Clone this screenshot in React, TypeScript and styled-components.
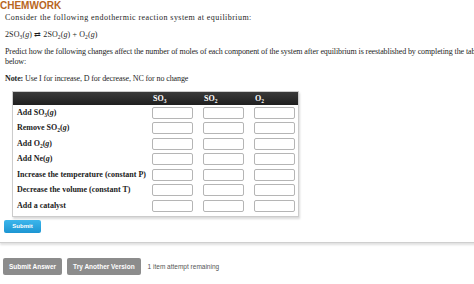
import styled, { createGlobalStyle } from 'styled-components';

const GlobalStyle = createGlobalStyle`
  html, body {
    margin: 0;
    padding: 0;
    background: #ffffff;
    overflow: hidden;
  }
`;

const rows = [
  { label: <>Add SO<sub>3</sub>(<i>g</i>)</> },
  { label: <>Remove SO<sub>2</sub>(<i>g</i>)</> },
  { label: <>Add O<sub>2</sub>(<i>g</i>)</> },
  { label: <>Add Ne(<i>g</i>)</> },
  { label: <>Increase the temperature (constant P)</> },
  { label: <>Decrease the volume (constant T)</> },
  { label: <>Add a catalyst</> },
];

export default function App() {
  return (
    <Page>
      <GlobalStyle />
      <Brand>CHEMWORK</Brand>
      <Question>
        <Para $track={0.45}>Consider the following endothermic reaction system at equilibrium:</Para>
        <Para $track={0.1}>
          2SO<sub>3</sub>(<i>g</i>) ⇄ 2SO<sub>2</sub>(<i>g</i>) + O<sub>2</sub>(<i>g</i>)
        </Para>
        <Para>
          Predict how the following changes affect the number of moles of each component of the
          system after equilibrium is reestablished by completing the table below:
        </Para>
        <Para>
          <b>Note:</b> Use I for increase, D for decrease, NC for no change
        </Para>
        <TableCard>
          <HeadRow>
            <HeadCell />
            <HeadCell>SO<sub>3</sub></HeadCell>
            <HeadCell>SO<sub>2</sub></HeadCell>
            <HeadCell>O<sub>2</sub></HeadCell>
          </HeadRow>
          {rows.map((row, i) => (
            <BodyRow key={i}>
              <RowLabel>{row.label}</RowLabel>
              <AnswerBox />
              <AnswerBox />
              <AnswerBox />
            </BodyRow>
          ))}
        </TableCard>
        <SubmitButton>Submit</SubmitButton>
      </Question>
      <Footer>
        <GrayButton>Submit Answer</GrayButton>
        <GrayButton>Try Another Version</GrayButton>
        <Attempts>1 item attempt remaining</Attempts>
      </Footer>
    </Page>
  );
}

const Page = styled.div`
  width: 474px;
  height: 284px;
  overflow: hidden;
`;

const Brand = styled.div`
  font-family: 'Liberation Sans', Arial, sans-serif;
  font-weight: bold;
  font-size: 10px;
  line-height: 11px;
  color: #b8661e;
`;

const Question = styled.div`
  width: 488px;
  padding: 2px 0 9px 5px;
  font-family: 'Liberation Serif', 'Times New Roman', serif;
  font-size: 8px;
  line-height: 10px;
  color: #1e1e1e;
  border-bottom: 1px solid #cfcfcf;
  box-shadow: 0 2px 2px rgba(0, 0, 0, 0.12);

  sub {
    font-size: 5.5px;
    line-height: 0;
    vertical-align: -2px;
  }
`;

const Para = styled.p<{ $track?: number }>`
  margin: 0 0 7px 0;
  letter-spacing: ${(p) => (p.$track ?? -0.1)}px;
`;

const TableCard = styled.div`
  margin: 5px 0 0 7px;
  width: 285px;
  border: 1px solid #cccccc;
  box-shadow: 1px 2px 2px rgba(0, 0, 0, 0.15);
  padding-bottom: 2px;
`;

const grid = `
  display: grid;
  grid-template-columns: 139px 51px 51px 42px;
  align-items: center;
`;

const HeadRow = styled.div`
  ${grid}
  height: 13px;
  background: linear-gradient(#3a3a3a, #1f1f1f);
`;

const HeadCell = styled.div`
  color: #ffffff;
  font-weight: bold;
  font-size: 8px;
  line-height: 13px;
  padding-left: 1px;
`;

const BodyRow = styled.div`
  ${grid}
  height: 15.5px;
`;

const RowLabel = styled.div`
  font-weight: bold;
  font-size: 8px;
  padding-left: 4px;
  white-space: nowrap;
  color: #222222;
`;

const AnswerBox = styled.div`
  width: 39px;
  height: 10px;
  border: 1px solid #b5b5b5;
  border-radius: 2px;
  background: #ffffff;
`;

const SubmitButton = styled.div`
  margin-top: 3px;
  margin-left: -1px;
  width: 37px;
  height: 13px;
  border-radius: 2px;
  background: linear-gradient(#3cb6ec, #1c95d2);
  color: #ffffff;
  font-family: 'Liberation Sans', Arial, sans-serif;
  font-weight: bold;
  font-size: 6px;
  line-height: 13px;
  text-align: center;
`;

const Footer = styled.div`
  display: flex;
  align-items: center;
  gap: 5px;
  margin-top: 15px;
  padding-left: 3px;
`;

const GrayButton = styled.div`
  height: 17px;
  padding: 0 6px;
  border-radius: 2px;
  background: #8c8c8c;
  color: #ffffff;
  font-family: 'Liberation Sans', Arial, sans-serif;
  font-weight: bold;
  font-size: 6.5px;
  line-height: 17px;
`;

const Attempts = styled.div`
  margin-left: 2px;
  font-family: 'Liberation Sans', Arial, sans-serif;
  font-size: 6.5px;
  color: #555555;
`;
